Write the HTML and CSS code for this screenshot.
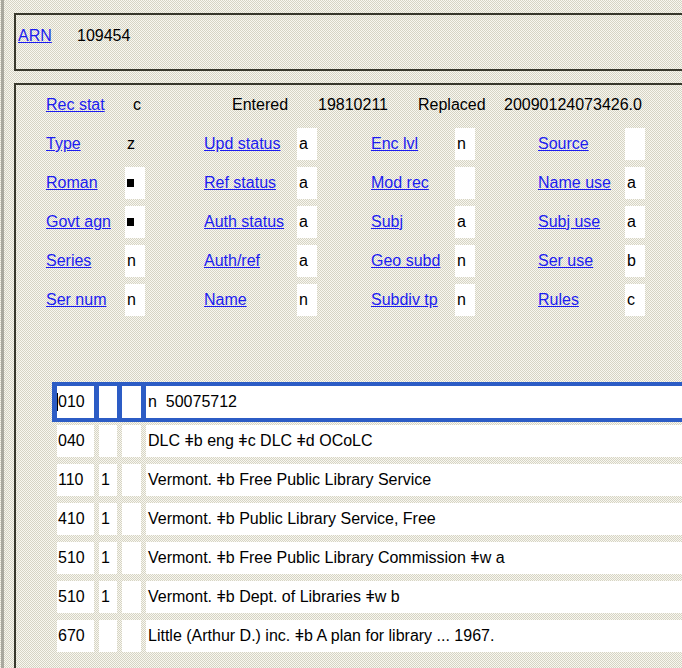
FILE: index.html
```html
<!DOCTYPE html>
<html>
<head>
<title>Authority Record 109454</title>
<link rel="stylesheet" href="styles.css">
</head>
<body>

<div class="window">

  <div class="panel arn-panel">
    <a href="#" class="fld arn-label">ARN</a><span>109454</span>
  </div>

  <div class="panel record-panel">

    <div class="fixed-fields">
      <div class="rec-head">
        <a href="#" class="fld rh-label">Rec stat</a>
        <span class="rh-stat">c</span>
        <span class="rh-name">Entered</span>
        <span class="rh-date">19810211</span>
        <span class="rh-name">Replaced</span>
        <span>20090124073426.0</span>
      </div>

      <div class="ff-row">
        <a href="#" class="fld">Type</a><span class="val plain">z</span>
        <a href="#" class="fld">Upd status</a><span class="val">a</span>
        <a href="#" class="fld">Enc lvl</a><span class="val">n</span>
        <a href="#" class="fld">Source</a><span class="val"></span>
      </div>
      <div class="ff-row">
        <a href="#" class="fld">Roman</a><span class="val"><i class="fill"></i></span>
        <a href="#" class="fld">Ref status</a><span class="val">a</span>
        <a href="#" class="fld">Mod rec</a><span class="val"></span>
        <a href="#" class="fld">Name use</a><span class="val">a</span>
      </div>
      <div class="ff-row">
        <a href="#" class="fld">Govt agn</a><span class="val"><i class="fill"></i></span>
        <a href="#" class="fld">Auth status</a><span class="val">a</span>
        <a href="#" class="fld">Subj</a><span class="val">a</span>
        <a href="#" class="fld">Subj use</a><span class="val">a</span>
      </div>
      <div class="ff-row">
        <a href="#" class="fld">Series</a><span class="val">n</span>
        <a href="#" class="fld">Auth/ref</a><span class="val">a</span>
        <a href="#" class="fld">Geo subd</a><span class="val">n</span>
        <a href="#" class="fld">Ser use</a><span class="val">b</span>
      </div>
      <div class="ff-row">
        <a href="#" class="fld">Ser num</a><span class="val">n</span>
        <a href="#" class="fld">Name</a><span class="val">n</span>
        <a href="#" class="fld">Subdiv tp</a><span class="val">n</span>
        <a href="#" class="fld">Rules</a><span class="val">c</span>
      </div>
    </div>

    <div class="var-fields">
      <div class="vf-row sel">
        <span class="tag"><i class="caret"></i>010</span><span class="ind"></span><span class="ind"></span><span class="data">n  50075712</span>
      </div>
      <div class="vf-row">
        <span class="tag">040</span><span class="ind"></span><span class="ind"></span><span class="data">DLC ǂb eng ǂc DLC ǂd OCoLC</span>
      </div>
      <div class="vf-row">
        <span class="tag">110</span><span class="ind">1</span><span class="ind"></span><span class="data">Vermont. ǂb Free Public Library Service</span>
      </div>
      <div class="vf-row">
        <span class="tag">410</span><span class="ind">1</span><span class="ind"></span><span class="data">Vermont. ǂb Public Library Service, Free</span>
      </div>
      <div class="vf-row">
        <span class="tag">510</span><span class="ind">1</span><span class="ind"></span><span class="data">Vermont. ǂb Free Public Library Commission ǂw a</span>
      </div>
      <div class="vf-row">
        <span class="tag">510</span><span class="ind">1</span><span class="ind"></span><span class="data">Vermont. ǂb Dept. of Libraries ǂw b</span>
      </div>
      <div class="vf-row">
        <span class="tag">670</span><span class="ind"></span><span class="ind"></span><span class="data">Little (Arthur D.) inc. ǂb A plan for library ... 1967.</span>
      </div>
    </div>

  </div>
</div>

</body>
</html>
```

FILE: styles.css
```css
html,
body {
  margin: 0;
  height: 100%;
}

body {
  font-family: "Liberation Sans", Arial, sans-serif;
  font-size: 16px;
  color: #000;
  overflow: hidden; /* panels run off the right edge */
  /* dithered grey/beige like the old desktop theme */
  background: repeating-conic-gradient(#f8f7f0 0 25%, #d6d4c4 0 50%) 0 0 / 2px 2px;
}

.window {
  margin-left: 1px;
  border-left: 3px solid #a9a89e;
  height: 668px;
  box-sizing: border-box;
  padding: 13px 0 0 10px;
  display: flex;
  flex-direction: column;
}

.panel {
  border: 2px solid #38382c;
  border-right: none;
  margin-right: -30px;
}

.fld {
  color: #1c1cf0;
  text-decoration: underline;
}

/* ARN header */
.arn-panel {
  height: 58px;
  box-sizing: border-box;
  padding: 11px 0 0 2px;
  line-height: 20px;
}

.arn-label {
  display: inline-block;
  width: 59px;
}

/* Record */
.record-panel {
  flex: 1;
  margin-top: 12px;
  border-bottom: none;
}

.fixed-fields {
  display: flex;
  flex-direction: column;
  gap: 7px;
  padding: 4px 0 0 30px;
}

.rec-head {
  display: flex;
  align-items: center;
  height: 32px;
}

.rh-label { width: 87px; }
.rh-stat { width: 99px; }
.rh-name { width: 86px; }
.rh-date { width: 100px; }

.ff-row {
  display: grid;
  grid-template-columns: 79px 79px 93px 74px 84px 83px 87px 40px;
  height: 32px;
  align-items: center;
}

.val {
  width: 20px;
  height: 32px;
  box-sizing: border-box;
  padding-left: 2px;
  background: #fff;
  display: flex;
  align-items: center;
}

.val.plain {
  background: transparent;
}

.fill {
  display: block;
  width: 7px;
  height: 8px;
  background: #000;
}

/* Variable fields */
.var-fields {
  margin: 66px 0 0 36px;
}

.vf-row {
  display: grid;
  grid-template-columns: 37px 18px 19px 1fr;
  column-gap: 5px;
  border: solid transparent;
  border-width: 4px 0 3px 4px;
  padding-left: 1px;
}

.vf-row.sel {
  background: #2c5cc5;
  border-color: #2c5cc5;
  border-bottom-width: 4px;
  margin-bottom: -1px;
}

.vf-row span {
  background: #fff;
  height: 32px;
  line-height: 32px;
  white-space: pre;
}

.tag { padding-left: 1px; }
.ind { padding-left: 2px; }
.data { padding-left: 2px; }

.caret {
  display: inline-block;
  width: 0;
  height: 18px;
  border-left: 1px solid #000;
  vertical-align: -4px;
  margin-left: -1px;
}
```
